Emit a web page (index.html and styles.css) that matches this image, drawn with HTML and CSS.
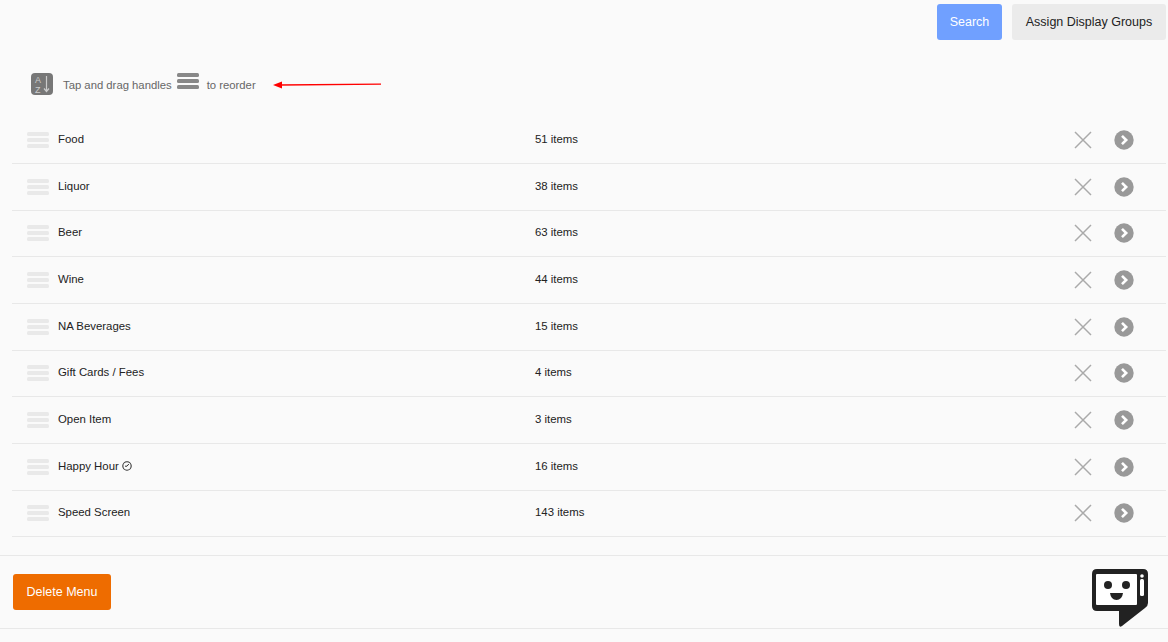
FILE: index.html
```html
<!DOCTYPE html>
<html lang="en">
<head>
    <meta charset="UTF-8">
    <meta name="viewport" content="width=device-width, initial-scale=1.0">
    <title>Menu Groups</title>
    <link rel="stylesheet" href="styles.css">
</head>
<body>
    <svg class="defs" width="0" height="0">
        <symbol id="handle" viewBox="0 0 22 16">
            <rect x="0" y="0" width="22" height="4" rx="1.5"/>
            <rect x="0" y="6" width="22" height="4" rx="1.5"/>
            <rect x="0" y="12" width="22" height="4" rx="1.5"/>
        </symbol>
        <symbol id="remove" viewBox="0 0 18 18">
            <path d="M1 1L17 17M17 1L1 17" fill="none" stroke="#aaa" stroke-width="1.5"/>
        </symbol>
        <symbol id="open" viewBox="0 0 20 20">
            <circle cx="10" cy="10" r="9.7" fill="#999"/>
            <path d="M8 5.8L12.2 10L8 14.2" fill="none" stroke="#fff" stroke-width="2.6"/>
        </symbol>
    </svg>

    <div class="topbar">
        <button type="button" class="btn btn-search">Search</button>
        <button type="button" class="btn btn-assign">Assign Display Groups</button>
    </div>

    <div class="hint">
        <svg class="sort-icon" width="22" height="22" viewBox="0 0 22 22">
            <rect width="22" height="22" rx="4" fill="#777"/>
            <text x="4" y="10" class="sort-letter">A</text>
            <text x="4" y="20" class="sort-letter">Z</text>
            <path d="M15.500 3V18M13 15.500L15.500 18.500L18 15.500" fill="none" stroke="#ccc" stroke-width="1.2"/>
        </svg>
        <span class="hint-text">Tap and drag handles</span>
        <svg class="hint-handle" width="22" height="16"><use href="#handle"/></svg>
        <span class="hint-text">to reorder</span>
        <svg class="arrow" width="108" height="8" viewBox="0 0 108 8">
            <path d="M7 4L108 3.200" stroke="#f00" stroke-width="1.3"/>
            <path d="M0 4L9 0.400V7.600Z" fill="#f00"/>
        </svg>
    </div>

    <ul class="groups">
        <li class="group">
            <svg class="handle" width="22" height="16"><use href="#handle"/></svg>
            <span class="group-name">Food</span>
            <span class="group-count">51 items</span>
            <svg class="remove" width="18" height="18"><use href="#remove"/></svg>
            <svg class="open" width="20" height="20"><use href="#open"/></svg>
        </li>
        <li class="group">
            <svg class="handle" width="22" height="16"><use href="#handle"/></svg>
            <span class="group-name">Liquor</span>
            <span class="group-count">38 items</span>
            <svg class="remove" width="18" height="18"><use href="#remove"/></svg>
            <svg class="open" width="20" height="20"><use href="#open"/></svg>
        </li>
        <li class="group">
            <svg class="handle" width="22" height="16"><use href="#handle"/></svg>
            <span class="group-name">Beer</span>
            <span class="group-count">63 items</span>
            <svg class="remove" width="18" height="18"><use href="#remove"/></svg>
            <svg class="open" width="20" height="20"><use href="#open"/></svg>
        </li>
        <li class="group">
            <svg class="handle" width="22" height="16"><use href="#handle"/></svg>
            <span class="group-name">Wine</span>
            <span class="group-count">44 items</span>
            <svg class="remove" width="18" height="18"><use href="#remove"/></svg>
            <svg class="open" width="20" height="20"><use href="#open"/></svg>
        </li>
        <li class="group">
            <svg class="handle" width="22" height="16"><use href="#handle"/></svg>
            <span class="group-name">NA Beverages</span>
            <span class="group-count">15 items</span>
            <svg class="remove" width="18" height="18"><use href="#remove"/></svg>
            <svg class="open" width="20" height="20"><use href="#open"/></svg>
        </li>
        <li class="group">
            <svg class="handle" width="22" height="16"><use href="#handle"/></svg>
            <span class="group-name">Gift Cards / Fees</span>
            <span class="group-count">4 items</span>
            <svg class="remove" width="18" height="18"><use href="#remove"/></svg>
            <svg class="open" width="20" height="20"><use href="#open"/></svg>
        </li>
        <li class="group">
            <svg class="handle" width="22" height="16"><use href="#handle"/></svg>
            <span class="group-name">Open Item</span>
            <span class="group-count">3 items</span>
            <svg class="remove" width="18" height="18"><use href="#remove"/></svg>
            <svg class="open" width="20" height="20"><use href="#open"/></svg>
        </li>
        <li class="group">
            <svg class="handle" width="22" height="16"><use href="#handle"/></svg>
            <span class="group-name">Happy Hour
                <svg class="clock" width="10" height="10" viewBox="0 0 10 10">
                    <circle cx="5" cy="5" r="4.200" fill="none" stroke="#333" stroke-width="1.1"/>
                    <path d="M6.800 3L5 5.200H3" fill="none" stroke="#333" stroke-width="1"/>
                </svg>
            </span>
            <span class="group-count">16 items</span>
            <svg class="remove" width="18" height="18"><use href="#remove"/></svg>
            <svg class="open" width="20" height="20"><use href="#open"/></svg>
        </li>
        <li class="group">
            <svg class="handle" width="22" height="16"><use href="#handle"/></svg>
            <span class="group-name">Speed Screen</span>
            <span class="group-count">143 items</span>
            <svg class="remove" width="18" height="18"><use href="#remove"/></svg>
            <svg class="open" width="20" height="20"><use href="#open"/></svg>
        </li>
    </ul>

    <div class="footer">
        <button type="button" class="btn btn-delete">Delete Menu</button>
        <!-- chat bot logo -->
        <svg class="bot" width="56" height="58" viewBox="0 0 56 58">
            <path d="M5 0H51Q56 0 56 5V34Q56 37 53 39L30 57Q27 59 27 55V42H5Q0 42 0 37V5Q0 0 5 0Z" fill="#222"/>
            <rect x="4" y="5" width="41" height="31" rx="1" fill="#fff"/>
            <rect x="48" y="10" width="4" height="17" rx="1.500" fill="#fff"/>
            <circle cx="50" cy="7" r="1.800" fill="#fff"/>
            <circle cx="16" cy="16" r="4" fill="#222"/>
            <circle cx="34" cy="16" r="4" fill="#222"/>
            <path d="M18 24H31Q30 31 24.500 31Q19 31 18 24Z" fill="#222"/>
        </svg>
    </div>
</body>
</html>
```

FILE: styles.css
```css
html, body {
    height: 100%;
}
body {
    margin: 0;
    background-color: #fafafa;
    color: #222;
    font-family: "Liberation Sans", Arial, sans-serif;
    font-size: 11.4px;
    overflow: hidden;
}
.defs {
    display: block;
    height: 0;
}
.btn {
    height: 36px;
    border: none;
    border-radius: 3px;
    font-family: inherit;
    font-size: 12.5px;
    cursor: pointer;
}
.topbar {
    display: flex;
    justify-content: flex-end;
    gap: 10px;
    padding: 4px 2px 0 0;
}
.btn-search {
    width: 65px;
    background-color: #70a0ff;
    color: #fff;
}
.btn-assign {
    width: 154px;
    background-color: #ebebeb;
    color: #222;
}
.hint {
    display: flex;
    align-items: center;
    height: 22px;
    margin-top: 33px;
    padding-left: 31px;
    color: #666;
    font-size: 11.3px;
}
.hint-text {
    padding-top: 2px;
}
.sort-icon {
    margin-right: 10px;
}
.sort-letter {
    fill: #ccc;
    font-size: 9px;
}
.hint-handle {
    flex-shrink: 0;
    fill: #888;
    margin: -6px 8px 0 5px;
}
.arrow {
    margin: 1px 0 0 17px;
}
.groups {
    list-style: none;
    margin: 22.15px 2px 0 12px;
    padding: 0;
}
.group {
    display: flex;
    align-items: center;
    height: 46.7px;
    box-sizing: border-box;
    padding-left: 15px;
    border-bottom: 1px solid #e8e8e8;
}
.handle {
    flex-shrink: 0;
    fill: #e9e9e9;
    margin-right: 9px;
}
.group-name {
    width: 477px;
    padding-bottom: 2px;
}
.group-count {
    flex: 1;
    padding-bottom: 2px;
}
.clock {
    vertical-align: -1px;
}
.remove {
    margin: 0 22.5px 0 0;
}
.open {
    margin-right: 32px;
}
.footer {
    display: flex;
    align-items: center;
    justify-content: space-between;
    height: 72px;
    margin-top: 17.6px;
    padding: 0 20px 0 13px;
    border-top: 1px solid #e8e8e8;
    border-bottom: 1px solid #e8e8e8;
}
.btn-delete {
    width: 98px;
    background-color: #ee6c00;
    color: #fff;
}
.bot {
    margin-top: 12px;
}
```
